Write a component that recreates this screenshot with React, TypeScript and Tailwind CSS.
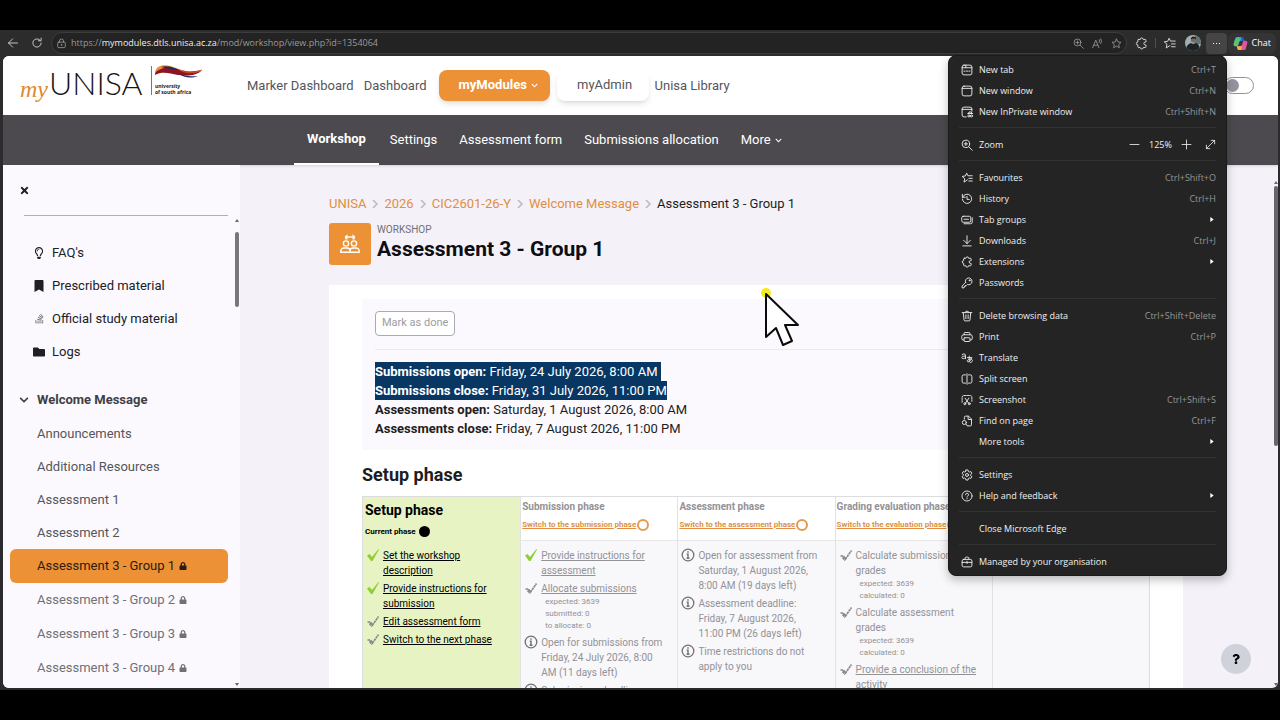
import type { ReactNode } from "react";
import {
  FaBookmark,
  FaChevronDown,
  FaFolder,
  FaLock,
  FaQuestion,
  FaRegLightbulb,
  FaStackOverflow,
  FaTimes,
} from "react-icons/fa";

const PUZZLE =
  "M4.5 3h2a1.8 1.8 0 0 1 3.6 0h2.4a1 1 0 0 1 1 1v2.2h-.8a1.8 1.8 0 0 0 0 3.6h.8V12a1 1 0 0 1-1 1h-2.4a1.8 1.8 0 0 1-3.6 0h-2a1 1 0 0 1-1-1V9.8a1.8 1.8 0 0 1 0-3.6V4a1 1 0 0 1 1-1z";

const icons: Record<string, ReactNode> = {
  back: <path d="M14 8H2M7.5 2.5L2 8l5.500 5.500" />,
  reload: <path d="M13.500 8a5.500 5.500 0 1 1-1.700-4M13.500 1.500V5H10" />,
  lock: (
    <>
      <rect x="2.500" y="6" width="11" height="8" rx="1.500" />
      <path d="M5 6V4.500a3 3 0 0 1 6 0V6" />
      <circle cx="8" cy="10" r=".6" />
    </>
  ),
  zoom: (
    <>
      <circle cx="6.500" cy="6.500" r="5" />
      <path d="M10.300 10.300L15 15M4.300 6.500h4.400M6.500 4.300v4.400" />
    </>
  ),
  read: <path d="M1 14L5.500 3 10 14M2.500 10.500h6M10.500 2.500a4 4 0 0 1 0 4M12.800 1a6.500 6.500 0 0 1 0 7" />,
  star: <path d="M8 1.500l2 4.200 4.600.6-3.400 3.200.9 4.600L8 11.900l-4.100 2.200.9-4.600L1.400 6.300 6 5.700z" />,
  puzzle: <path d={PUZZLE} />,
  favourites: (
    <path d="M8.500 10.500L4 13.500l.9-4.600L1.500 5.900l4.300-.6L7.500 1.500l1.700 3.500H15M10.500 8.500H15M10.500 12H15" />
  ),
  newTab: (
    <>
      <rect x="1.500" y="1.500" width="13" height="13" rx="2.500" />
      <path d="M1.500 5h5V1.500M6.500 5h8M4 9.500h1.500M7.300 9.500h1.500M10.500 9.500H12" />
    </>
  ),
  window: (
    <>
      <rect x="1.500" y="1.500" width="13" height="13" rx="2.500" />
      <path d="M1.500 4.500h13" />
    </>
  ),
  inPrivate: (
    <>
      <path d="M7 14.500H4A2.500 2.500 0 0 1 1.500 12V4A2.500 2.500 0 0 1 4 1.500h8A2.500 2.500 0 0 1 14.500 4v3M1.500 4.500h13M9 10h6.500M10 10l.7-2h3l.7 2" />
      <circle cx="10.500" cy="13.300" r="1.400" />
      <circle cx="14" cy="13.300" r="1.400" />
    </>
  ),
  history: <path d="M2.200 5.500A6.200 6.200 0 1 1 1.800 8M1.800 1.800v3.900h3.900M8 4.500V8.500h3" />,
  tabGroups: (
    <>
      <rect x="1" y="3" width="12" height="8" rx="2" />
      <path d="M4 13h8.500a2.500 2.500 0 0 0 2.500-2.500V5M4 7h6" />
    </>
  ),
  download: <path d="M8 1v10.500M3.500 7L8 11.500 12.500 7M2.500 14.500h11" />,
  key: (
    <>
      <path d="M6 7.500L1.500 12v2.500H4v-1.500h1.500v-1.500H7l1.500-1.500a4.500 4.500 0 1 0-2.500-2.500z" />
      <circle cx="11.500" cy="4.500" r=".7" />
    </>
  ),
  trash: (
    <path d="M1.500 3.500h13M5.500 3.500a2.500 2 0 0 1 5 0M3 3.500l1 9.500a1.500 1.500 0 0 0 1.500 1.500h5A1.500 1.500 0 0 0 12 13l1-9.500M6.500 6.500v5M9.500 6.500v5" />
  ),
  print: (
    <>
      <path d="M4 5V3.500A1.500 1.500 0 0 1 5.500 2h5A1.500 1.500 0 0 1 12 3.500V5M4 12H3a2 2 0 0 1-2-2V7.500A2.500 2.500 0 0 1 3.500 5h9A2.500 2.500 0 0 1 15 7.500V10a2 2 0 0 1-2 2h-1" />
      <rect x="4" y="9" width="8" height="5" rx="1" />
    </>
  ),
  translate: (
    <>
      <path d="M1.500 3.500C3 2 6 2 6 4.500V9M6 5.500C2.500 5 1 6 1 7.500S4 9.800 6 7.500" />
      <path d="M8.500 7.500h6M11 5.500V13M14 8.500c-.5 3-4.500 6-5.500 4s4-4.500 6-2.500-.5 4-2 4" />
    </>
  ),
  split: <path d="M6 2.500H3.500a2 2 0 0 0-2 2v7a2 2 0 0 0 2 2H6M8 1v14M10 2.500h2.500a2 2 0 0 1 2 2v7a2 2 0 0 1-2 2H10" />,
  screenshot: (
    <>
      <path d="M1.500 11V4a2 2 0 0 1 2-2h9a2 2 0 0 1 2 2v7" strokeDasharray="2.200 1.400" />
      <path d="M5.500 5.500l4.500 6.500M10.500 5.500L6 12" />
      <circle cx="5" cy="13" r="1.300" />
      <circle cx="11" cy="13" r="1.300" />
    </>
  ),
  find: (
    <>
      <path d="M4.500 5.500V3a1.500 1.500 0 0 1 1.500-1.500h4L14 5.500V13a1.500 1.500 0 0 1-1.500 1.500H9M9.500 1.500V6H14" />
      <circle cx="4.500" cy="10" r="2.700" />
      <path d="M6.500 12l2 2.500" />
    </>
  ),
  settings: (
    <>
      <path d="M6.600 1.300h2.800l.4 2 1.300.8 2-.7 1.400 2.400-1.600 1.400v1.600l1.600 1.400-1.400 2.400-2-.7-1.300.8-.4 2H6.600l-.4-2-1.300-.8-2 .7-1.400-2.400 1.600-1.400V7.200L1.500 5.800l1.400-2.400 2 .7 1.300-.8z" />
      <circle cx="8" cy="8" r="2" />
    </>
  ),
  help: (
    <>
      <circle cx="8" cy="8" r="6.700" />
      <path d="M6 6.300a2 2 0 1 1 3 1.700c-.7.400-1 .8-1 1.500M8 11.300v.5" />
    </>
  ),
  briefcase: (
    <>
      <rect x="1.500" y="4.500" width="13" height="10" rx="2" />
      <path d="M5.500 4.500V3A1.500 1.500 0 0 1 7 1.500h2A1.500 1.500 0 0 1 10.500 3v1.500M1.500 8.500h13M8 7v3" />
    </>
  ),
  expand: <path d="M9 2h5v5M14 2L2 14M7 14H2V9" />,
  minus: <path d="M1.500 8h13" />,
  plus: <path d="M8 1.500v13M1.500 8h13" />,
};

function Icon({ name, className = "size-3" }: { name: string; className?: string }) {
  return (
    <svg viewBox="0 0 16 16" fill="none" stroke="currentColor" strokeWidth="1.200" strokeLinecap="round" strokeLinejoin="round" className={`shrink-0 ${className}`} aria-hidden="true">
      {icons[name]}
    </svg>
  );
}

type MenuItem = { label: string; icon?: string; keys?: string; sub?: boolean; zoom?: boolean };

const menuGroups: MenuItem[][] = [
  [
    { label: "New tab", icon: "newTab", keys: "Ctrl+T" },
    { label: "New window", icon: "window", keys: "Ctrl+N" },
    { label: "New InPrivate window", icon: "inPrivate", keys: "Ctrl+Shift+N" },
  ],
  [{ label: "Zoom", icon: "zoom", zoom: true }],
  [
    { label: "Favourites", icon: "favourites", keys: "Ctrl+Shift+O" },
    { label: "History", icon: "history", keys: "Ctrl+H" },
    { label: "Tab groups", icon: "tabGroups", sub: true },
    { label: "Downloads", icon: "download", keys: "Ctrl+J" },
    { label: "Extensions", icon: "puzzle", sub: true },
    { label: "Passwords", icon: "key" },
  ],
  [
    { label: "Delete browsing data", icon: "trash", keys: "Ctrl+Shift+Delete" },
    { label: "Print", icon: "print", keys: "Ctrl+P" },
    { label: "Translate", icon: "translate" },
    { label: "Split screen", icon: "split" },
    { label: "Screenshot", icon: "screenshot", keys: "Ctrl+Shift+S" },
    { label: "Find on page", icon: "find", keys: "Ctrl+F" },
    { label: "More tools", sub: true },
  ],
  [
    { label: "Settings", icon: "settings" },
    { label: "Help and feedback", icon: "help", sub: true },
  ],
  [{ label: "Close Microsoft Edge" }],
  [{ label: "Managed by your organisation", icon: "briefcase" }],
];

type Task = { text: string; state: "done" | "todo" | "info"; link?: boolean; details?: string[] };
type Phase = { title: string; action: string; tasks: Task[] };

const phases: Phase[] = [
  {
    title: "Submission phase",
    action: "Switch to the submission phase",
    tasks: [
      { text: "Provide instructions for assessment", state: "done", link: true },
      {
        text: "Allocate submissions",
        state: "todo",
        link: true,
        details: ["expected: 3639", "submitted: 0", "to allocate: 0"],
      },
      { text: "Open for submissions from Friday, 24 July 2026, 8:00 AM (11 days left)", state: "info" },
      { text: "Submissions deadline:", state: "info" },
    ],
  },
  {
    title: "Assessment phase",
    action: "Switch to the assessment phase",
    tasks: [
      { text: "Open for assessment from Saturday, 1 August 2026, 8:00 AM (19 days left)", state: "info" },
      { text: "Assessment deadline: Friday, 7 August 2026, 11:00 PM (26 days left)", state: "info" },
      { text: "Time restrictions do not apply to you", state: "info" },
    ],
  },
  {
    title: "Grading evaluation phase",
    action: "Switch to the evaluation phase",
    tasks: [
      { text: "Calculate submission grades", state: "todo", details: ["expected: 3639", "calculated: 0"] },
      { text: "Calculate assessment grades", state: "todo", details: ["expected: 3639", "calculated: 0"] },
      { text: "Provide a conclusion of the activity", state: "todo", link: true },
    ],
  },
];

const setupTasks: Task[] = [
  { text: "Set the workshop description", state: "done", link: true },
  { text: "Provide instructions for submission", state: "done", link: true },
  { text: "Edit assessment form", state: "todo", link: true },
  { text: "Switch to the next phase", state: "todo", link: true },
];

function TaskIcon({ state }: { state: Task["state"] }) {
  if (state === "info") {
    return (
      <svg viewBox="0 0 14 14" className="size-[14px] shrink-0 text-[#707075]" fill="none" stroke="currentColor" aria-hidden="true">
        <circle cx="7" cy="7" r="5.800" strokeWidth="1.300" />
        <path d="M7 3.300v1.500M5.800 6.300H7v4M5.600 10.300h2.900" strokeWidth="1.400" />
      </svg>
    );
  }
  return (
    <svg viewBox="0 0 14 14" className={`size-[14px] shrink-0 ${state === "done" ? "text-[#8fcf33]" : "text-[#85858a]"}`} aria-hidden="true">
      {state === "done" ? (
        <path d="M1 7.500L3.500 6 6 9 12.500 1l.5.500L6.500 13H5z" fill="currentColor" />
      ) : (
        <path d="M1.500 8H4.500L6.500 11 12.500 2.500M3.500 9.500L6 12.500" fill="none" stroke="currentColor" strokeWidth="1.600" strokeDasharray="2.600 .5" />
      )}
    </svg>
  );
}

function TaskList({ tasks }: { tasks: Task[] }) {
  return (
    <ul className="flex flex-col gap-[3px] pt-[7px] pr-3 pl-[3px] text-[10px] leading-[15px]">
      {tasks.map((task) => (
        <li key={task.text} className="flex gap-[3px]">
          <TaskIcon state={task.state} />
          <div>
            {task.link ? (
              <a href="#task" className="underline">
                {task.text}
              </a>
            ) : (
              task.text
            )}
            {task.details?.map((d) => (
              <div key={d} className="pl-1 text-[8px] leading-[12px]">
                {d}
              </div>
            ))}
          </div>
        </li>
      ))}
    </ul>
  );
}

function BrowserBar() {
  return (
    <div className="flex h-[26px] shrink-0 items-center bg-[#2c2c2c] pr-1 pl-[7px] font-['Open_Sans','Noto_Sans',sans-serif] text-[9px] text-[#d6d6d6]">
      <button type="button" aria-label="Back" className="mr-3">
        <Icon name="back" />
      </button>
      <button type="button" aria-label="Reload" className="mr-2">
        <Icon name="reload" />
      </button>
      <div className="flex h-[22px] flex-1 items-center rounded-full border border-[#3c3c3c] bg-[#232323] px-1 text-[#9a9a9a]">
        <Icon name="lock" className="size-[11px]" />
        <span className="ml-1">
          https://<span className="text-[#eeeeee]">mymodules.dtls.unisa.ac.za</span>/mod/workshop/view.php?id=1354064
        </span>
        <div className="ml-auto flex items-center gap-2">
          <Icon name="zoom" className="size-[11px]" />
          <Icon name="read" className="size-[11px]" />
          <Icon name="star" className="size-[11px]" />
        </div>
      </div>
      <div className="flex items-center pl-2">
        <Icon name="puzzle" className="size-[13px]" />
        <span className="mx-[7px] h-[10px] w-px bg-[#505050]" />
        <Icon name="favourites" className="size-[13px]" />
        <svg viewBox="0 0 16 16" className="ml-[9px] size-4" aria-hidden="true">
          <clipPath id="avatar">
            <circle cx="8" cy="8" r="8" />
          </clipPath>
          <g clipPath="url(#avatar)">
            <rect width="16" height="16" fill="#9fb0b4" />
            <rect x="10" width="6" height="9" fill="#5f7576" />
            <path d="M1 16c0-5 2-7 5-8l2 1 3-1c3 1 4 4 4 8z" fill="#1c2226" />
            <circle cx="8.500" cy="5" r="2.600" fill="#8b6552" />
            <path d="M5.800 4.500c0-4 5.400-4 5.400 0-1-1.500-4-1.500-5.400 0z" fill="#241d1b" />
          </g>
        </svg>
        <button type="button" aria-label="Settings and more" className="ml-[5px] flex size-[21px] items-center justify-center gap-[2px] rounded bg-[#454545]">
          <span className="size-px bg-white" />
          <span className="size-px bg-white" />
          <span className="size-px bg-white" />
        </button>
        <button type="button" className="ml-px flex h-[21px] items-center gap-1 rounded-md bg-[#343434] px-[5px] text-white">
          <svg viewBox="0 0 16 16" className="size-[15px]" aria-hidden="true">
            <path d="M4.500 1h5c1 0 1.500.6 1.800 1.500L12 5H8.500c-1.200 0-1.800.7-2.200 2L5 11H2.500C.8 11 .4 9.800.8 8.300l1.500-5.500C2.600 1.700 3.300 1 4.500 1z" fill="#29a4e8" />
            <path d="M2 4l4-3 1.500 3L5 11H2.500C.8 11 .4 9.800.8 8.300z" fill="#5fc26b" />
            <path d="M11.500 15h-5c-1 0-1.500-.6-1.800-1.500L4 11h3.500c1.200 0 1.800-.7 2.200-2L11 5h2.500c1.700 0 2.100 1.200 1.700 2.700l-1.500 5.500c-.3 1.100-1 1.800-2.200 1.800z" fill="#e0559f" />
            <path d="M4 11h3.500c1 0 1.700-.5 2-1.300L9 15H6.500c-1 0-1.500-.6-1.800-1.500z" fill="#f6b13c" />
            <path d="M8.500 1h1c1 0 1.500.6 1.800 1.500L12 5H9.500z" fill="#2450c8" />
          </svg>
          Chat
        </button>
      </div>
    </div>
  );
}

function BrowserMenu() {
  return (
    <div role="menu" className="absolute top-[25px] right-[53px] z-20 w-[279px] rounded-lg border border-[#1a1a1a] bg-[#242424] py-[3px] font-['Open_Sans','Noto_Sans',sans-serif] text-[9px] text-[#f0f0f0] shadow-[0_4px_10px_rgba(0,0,0,0.25)]">
      {menuGroups.map((group, i) => (
        <div key={i}>
          {i > 0 && <div className="mx-[10px] mt-[5px] mb-[6px] h-px bg-[#333333]" />}
          {group.map((item) =>
            item.zoom ? (
              <div key={item.label} className="flex h-[21px] items-center pr-[10px] pl-3">
                <Icon name={item.icon!} />
                <span className="ml-[6px] flex-1">{item.label}</span>
                <button type="button" aria-label="Zoom out">
                  <Icon name="minus" className="size-[11px]" />
                </button>
                <span className="w-[41px] text-center">125%</span>
                <button type="button" aria-label="Zoom in">
                  <Icon name="plus" className="size-[11px]" />
                </button>
                <button type="button" aria-label="Full screen" className="ml-[13px]">
                  <Icon name="expand" className="size-[11px]" />
                </button>
              </div>
            ) : (
              <button key={item.label} type="button" role="menuitem" className="flex h-[21px] w-full items-center pr-[10px] pl-3 text-left">
                {item.icon ? <Icon name={item.icon} /> : <span className="w-3" />}
                <span className="ml-[6px] flex-1">{item.label}</span>
                {item.keys && <span className="text-[#969696]">{item.keys}</span>}
                {item.sub && (
                  <svg viewBox="0 0 4 6" className="mr-[2px] h-[5px] w-1" aria-hidden="true">
                    <path d="M0 0l4 3-4 3z" fill="#fff" />
                  </svg>
                )}
              </button>
            )
          )}
        </div>
      ))}
    </div>
  );
}

function Logo() {
  return (
    <svg viewBox="0 0 190 44" className="h-11 w-[190px] shrink-0" role="img" aria-label="myUNISA university of south africa">
      <text x="0" y="33" fill="#e0882c" className="font-['Liberation_Serif',serif] text-[24px] italic">my</text>
      <text x="29" y="31" fill="#151515" className="font-[Lato,sans-serif] text-[32px] font-light">UNISA</text>
      <path d="M131.500 2v29" stroke="#777" strokeWidth="1" />
      <path d="M135 11c0-11 12-10 23-6 10 4 16 2 24 1-5 6-15 6-24 5-9-2-16-4-23 0z" fill="#8f1422" />
      <path d="M135 9c1-10 13-9 21-5-8-1-15-1-21 5z" fill="#ef8f33" />
      <path d="M141 3c7-2 13 1 19 3-7 0-13-2-19-3zM158 10c7 1 10 3 20 2-8 3-14 1-20-2z" fill="#232a5c" />
      <path d="M158 5c9 4 16 4 24 1-8 4-16 4-24-1z" stroke="#e8662b" strokeWidth=".6" fill="none" />
      <text x="135" y="24" fill="#222" className="font-['Open_Sans',sans-serif] text-[5px] font-bold">university</text>
      <text x="135" y="30" fill="#222" className="font-['Open_Sans',sans-serif] text-[5px] font-bold">of south africa</text>
    </svg>
  );
}

function SiteHeader() {
  return (
    <header className="flex h-[59px] shrink-0 items-center bg-white pr-[24px] pl-[17px] text-[13px] text-[#55555a]">
      <Logo />
      <nav className="ml-[37px] flex items-center">
        <a href="#marker">Marker Dashboard</a>
        <a href="#dashboard" className="ml-[10px]">
          Dashboard
        </a>
        <button type="button" className="ml-3 flex h-[31px] w-[111px] items-center gap-1 rounded-lg bg-[#ed9136] pb-px pl-5 font-bold text-white shadow-md">
          myModules
          <FaChevronDown className="size-[7px]" />
        </button>
        <button type="button" className="ml-[7px] h-[31px] w-[92px] rounded-lg bg-white pb-px pl-1 shadow-md">
          myAdmin
        </button>
        <a href="#library" className="ml-[6px]">
          Unisa Library
        </a>
      </nav>
      <input
        type="checkbox"
        aria-label="Edit mode"
        className="ml-auto h-[17px] w-[30px] appearance-none rounded-full border border-[#8f8f98] bg-white before:m-[1px] before:block before:size-[13px] before:rounded-full before:bg-[#96959f]"
      />
    </header>
  );
}

const tabs = ["Workshop", "Settings", "Assessment form", "Submissions allocation"];

function TabBar() {
  return (
    <nav className="flex h-[50px] shrink-0 bg-[#4c4a4e] pl-[291px] text-[13px] text-white shadow">
      {tabs.map((tab, i) => (
        <a key={tab} href="#tab" className={`flex items-center ${i === 0 ? "border-b-2 border-white px-[13px] font-bold" : "px-[11px]"}`}>
          {tab}
        </a>
      ))}
      <button type="button" className="flex items-center gap-1 px-[11px]">
        More <FaChevronDown className="size-[7px]" />
      </button>
    </nav>
  );
}

const resources = [
  { label: "FAQ's", icon: <FaRegLightbulb className="size-3" /> },
  { label: "Prescribed material", icon: <FaBookmark className="size-3" /> },
  { label: "Official study material", icon: <FaStackOverflow className="size-[11px] text-[#77777c]" /> },
  { label: "Logs", icon: <FaFolder className="size-3" /> },
];

const sections = ["Announcements", "Additional Resources", "Assessment 1", "Assessment 2"];
const groups = ["Assessment 3 - Group 1", "Assessment 3 - Group 2", "Assessment 3 - Group 3", "Assessment 3 - Group 4"];

function Sidebar() {
  return (
    <aside className="flex w-[237px] shrink-0 flex-col bg-[#fbf9fe] text-[13px] text-[#202024]">
      <div className="flex h-[50px] items-center px-4">
        <button type="button" aria-label="Close">
          <FaTimes className="size-[11px]" />
        </button>
      </div>
      <div className="flex min-h-0 flex-1">
        <div className="min-w-0 flex-1 overflow-hidden">
          <div className="mr-[5px] ml-[21px] border-t border-[#dba765] shadow-md" />
          <ul className="pt-5 pl-[30px]">
            {resources.map((r) => (
              <li key={r.label}>
                <a href="#resource" className="flex h-[33px] items-center gap-[7px]">
                  <span className="flex w-3 justify-center">{r.icon}</span>
                  {r.label}
                </a>
              </li>
            ))}
          </ul>
          <button type="button" className="mt-[15px] flex h-[34px] items-center gap-2 pl-4 font-bold text-[#3f3f45]">
            <FaChevronDown className="size-[10px]" />
            Welcome Message
          </button>
          <ul className="text-[#55555b]">
            {sections.map((s) => (
              <li key={s}>
                <a href="#section" className="flex h-[33px] items-center pl-[34px]">
                  {s}
                </a>
              </li>
            ))}
            {groups.map((g, i) => (
              <li key={g}>
                <a
                  href="#group"
                  className={`mr-[5px] ml-[7px] flex h-[34px] items-center gap-1 rounded-md pl-[27px] ${i === 0 ? "bg-[#ed9136] text-[#2b1b10]" : "text-[#707076]"}`}
                >
                  {g}
                  <FaLock className="size-2" />
                </a>
              </li>
            ))}
          </ul>
        </div>
        <div className="flex w-[7px] flex-col items-center justify-between">
          <div className="flex flex-col items-center gap-[10px]">
            <svg viewBox="0 0 4 3" className="mt-1 h-[3px] w-1" aria-hidden="true">
              <path d="M2 0l2 3H0z" fill="#666" />
            </svg>
            <span className="h-[75px] w-1 rounded-full bg-[#77777b]" />
          </div>
          <svg viewBox="0 0 4 3" className="mb-[2px] h-[3px] w-1" aria-hidden="true">
            <path d="M0 0h4L2 3z" fill="#666" />
          </svg>
        </div>
      </div>
    </aside>
  );
}

const crumbs = ["UNISA", "2026", "CIC2601-26-Y", "Welcome Message"];

const dates = [
  { label: "Submissions open:", value: "Friday, 24 July 2026, 8:00 AM\u00a0", selected: true },
  { label: "Submissions close:", value: "Friday, 31 July 2026, 11:00 PM", selected: true },
  { label: "Assessments open:", value: "Saturday, 1 August 2026, 8:00 AM" },
  { label: "Assessments close:", value: "Friday, 7 August 2026, 11:00 PM" },
];

function PhasePlan() {
  return (
    <div className="grid min-h-[240px] grid-cols-5 border border-[#dddde0] text-[#929297]">
      <section className="bg-[#e7f3c2] text-black">
        <div className="flex h-11 flex-col gap-[2px] px-[2px] pt-[3px]">
          <h3 className="text-[14px] leading-5 font-bold">Setup phase</h3>
          <p className="flex h-5 items-center gap-[3px] text-[8px] font-bold">
            Current phase <span className="size-[11px] rounded-full bg-black" />
          </p>
        </div>
        <TaskList tasks={setupTasks} />
      </section>
      {phases.map((p) => (
        <section key={p.title} className="border-l border-[#e2e2e5] bg-[#f8f7fa]">
          <div className="flex h-11 flex-col border-b border-[#e6e6e8] bg-white px-px pt-[2px]">
            <h3 className="text-[10px] leading-4 font-bold whitespace-nowrap">{p.title}</h3>
            <p className="flex h-5 items-center gap-px text-[8px] font-bold whitespace-nowrap">
              <a href="#switch" className="text-[#e08f42] underline">
                {p.action}
              </a>
              <span className="size-3 rounded-full border-2 border-[#e59a52]" />
            </p>
          </div>
          <TaskList tasks={p.tasks} />
        </section>
      ))}
      <section className="border-l border-[#e2e2e5] bg-[#f8f7fa]">
        <div className="h-11 border-b border-[#e6e6e8] bg-white" />
      </section>
    </div>
  );
}

function Workshop() {
  return (
    <main className="min-w-0 flex-1 overflow-hidden pr-[90px] pl-[89px] text-[13px] text-[#1d1d20]">
      <nav className="mt-[29px] flex h-5 items-center" aria-label="Breadcrumb">
        {crumbs.map((c) => (
          <span key={c} className="flex items-center">
            <a href="#crumb" className="text-[#e08f3d]">
              {c}
            </a>
            <svg viewBox="0 0 6 8" className="mx-[6px] h-2 w-[6px]" fill="none" stroke="#b9b9c0" strokeWidth="1.500" aria-hidden="true">
              <path d="M1 0l4 4-4 4" />
            </svg>
          </span>
        ))}
        <span>Assessment 3 - Group 1</span>
      </nav>
      <div className="mt-[9px] flex gap-[6px]">
        <span className="flex size-[42px] items-center justify-center rounded-[3px] bg-[#ed9136]">
          <svg viewBox="0 0 20 20" className="size-5" fill="none" stroke="#fff" strokeWidth="1.400" aria-hidden="true">
            <circle cx="6" cy="9.500" r="2.600" />
            <circle cx="14" cy="9.500" r="2.600" />
            <path d="M.8 18.300v-1.500c0-1.800 1.500-2.800 3.200-2.800h3c1.700 0 3 1 3 2.800v1.500zM10 18.300h9.200v-1.500c0-1.800-1.500-2.800-3.200-2.800h-3c-1.700 0-3 1-3 2.800" />
            <path d="M6 5.500V3h8v2.500" />
            <path d="M7.500 .3v5.400L4.500 3zM12.500 .3v5.400L15.500 3z" fill="#fff" stroke="none" />
          </svg>
        </span>
        <div>
          <p className="text-[10px] leading-[14px] text-[#707075]">WORKSHOP</p>
          <h1 className="text-[21px] leading-6 font-bold text-[#0d0d12]">Assessment 3 - Group 1</h1>
        </div>
      </div>

      <div className="mt-5 min-h-[440px] bg-white px-[33px] pt-[14px]">
        <div className="bg-[#fbf9fe] px-[13px] pt-3 pb-3">
          <button type="button" className="h-[25px] rounded-sm border border-[#aaaab0] bg-white px-[6px] text-[11px] text-[#9c9ca2]">
            Mark as done
          </button>
          <hr className="mt-[13px] mb-3 border-[#ebe9ee]" />
          {dates.map((d) => (
            <p key={d.label} className="leading-[19px]">
              <span className={d.selected ? "inline-block bg-[#083763] text-white" : ""}>
                <strong>{d.label}</strong> {d.value}
              </span>
            </p>
          ))}
        </div>
        <h2 className="mt-[13px] mb-[9px] text-[18px] leading-6 font-bold">Setup phase</h2>
        <PhasePlan />
      </div>
    </main>
  );
}

export default function App() {
  return (
    <div className="h-screen overflow-hidden bg-black py-[30px] font-[Roboto,sans-serif]">
      <div className="relative flex h-full flex-col bg-[#2b2b2d]">
        <BrowserBar />
        <div className="mr-[2px] mb-[2px] ml-[3px] flex min-h-0 flex-1 flex-col overflow-hidden rounded-md bg-[#f4f1f9]">
          <SiteHeader />
          <TabBar />
          <div className="flex min-h-0 flex-1">
            <Sidebar />
            <Workshop />
            <div className="flex w-[5px] flex-col items-center justify-between">
              <div className="flex flex-col items-center gap-[2px]">
                <svg viewBox="0 0 4 3" className="mt-4 h-[3px] w-1" aria-hidden="true">
                  <path d="M2 0l2 3H0z" fill="#666" />
                </svg>
                <span className="h-[260px] w-1 rounded-full bg-[#66666c]" />
              </div>
              <svg viewBox="0 0 4 3" className="mb-[2px] h-[3px] w-1" aria-hidden="true">
                <path d="M0 0h4L2 3z" fill="#666" />
              </svg>
            </div>
          </div>
        </div>

        <button type="button" aria-label="Help" className="absolute right-[29px] bottom-4 z-10 flex size-[30px] items-center justify-center rounded-full bg-[#cfd2da] text-black">
          <FaQuestion className="size-[10px]" />
        </button>
        <BrowserMenu />
        <svg viewBox="0 0 40 62" className="absolute top-[256px] left-[760px] z-30 h-[62px] w-10" aria-hidden="true">
          <circle cx="6" cy="7" r="5" fill="#f5ea1c" />
          <path d="M6 8v43l10-9 7 17 9-4-7-16h13z" fill="#fff" stroke="#0b0b0b" strokeWidth="2" strokeLinejoin="round" />
        </svg>
      </div>
    </div>
  );
}
